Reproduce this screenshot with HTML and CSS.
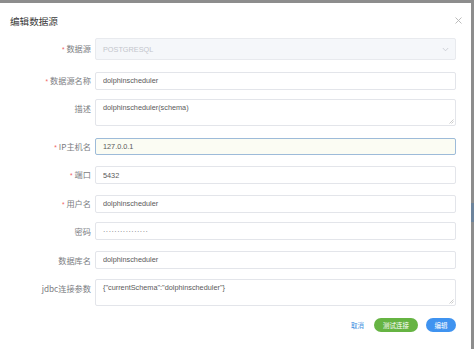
FILE: index.html
```html
<!DOCTYPE html>
<html lang="zh">
<head>
<meta charset="utf-8">
<link rel="stylesheet" href="styles.css">
</head>
<body>
<div class="screen">
  <div class="dialog">
    <div class="header">
      <span class="title">编辑数据源</span>
      <svg class="close" width="7" height="7" viewBox="0 0 7 7"><path d="M0.5 0.5L6.5 6.5M6.5 0.5L0.5 6.5" stroke="#b4b4b4" stroke-width="0.9"/></svg>
    </div>
    <div class="form">
      <div class="row row-select">
        <label class="label"><span class="req">*</span>数据源</label>
        <div class="field select disabled">POSTGRESQL
          <svg class="arrow" width="7" height="5" viewBox="0 0 7 5"><path d="M0.8 1L3.5 3.8L6.2 1" fill="none" stroke="#c9ccd2" stroke-width="0.9"/></svg>
        </div>
      </div>
      <div class="row">
        <label class="label"><span class="req">*</span>数据源名称</label>
        <input class="field" type="text" value="dolphinscheduler">
      </div>
      <div class="row row-area">
        <label class="label">描述</label>
        <div class="field area">dolphinscheduler(schema)<svg class="grip" width="5" height="5" viewBox="0 0 5 5"><path d="M4.5 0.5L0.5 4.5M4.5 2.5L2.5 4.5" stroke="#aaa" stroke-width="0.6"/></svg></div>
      </div>
      <div class="row">
        <label class="label"><span class="req">*</span>IP主机名</label>
        <input class="field focused" type="text" value="127.0.0.1">
      </div>
      <div class="row">
        <label class="label"><span class="req">*</span>端口</label>
        <input class="field" type="text" value="5432">
      </div>
      <div class="row">
        <label class="label"><span class="req">*</span>用户名</label>
        <input class="field" type="text" value="dolphinscheduler">
      </div>
      <div class="row">
        <label class="label">密码</label>
        <div class="field pwd">················</div>
      </div>
      <div class="row">
        <label class="label">数据库名</label>
        <input class="field" type="text" value="dolphinscheduler">
      </div>
      <div class="row row-area">
        <label class="label">jdbc连接参数</label>
        <div class="field area">{"currentSchema":"dolphinscheduler"}<svg class="grip" width="5" height="5" viewBox="0 0 5 5"><path d="M4.5 0.5L0.5 4.5M4.5 2.5L2.5 4.5" stroke="#aaa" stroke-width="0.6"/></svg></div>
      </div>
    </div>
    <div class="footer">
      <span class="cancel">取消</span>
      <span class="btn btn-green">测试连接</span>
      <span class="btn btn-blue">编辑</span>
    </div>
  </div>
  <div class="side"><div class="side-blue"></div></div>
</div>
</body>
</html>
```

FILE: styles.css
```css
html, body {
  margin: 0;
  padding: 0;
  height: 100%;
  overflow: hidden;
  background: #8d8d8d;
}
.screen {
  display: flex;
  height: 100%;
  padding-top: 3px;
  box-sizing: border-box;
}
.dialog {
  width: 471px;
  flex: none;
  background: #fff;
  font-family: "Liberation Sans", "Noto Sans CJK SC", sans-serif;
}
.side {
  flex: 1;
  padding-top: 200px;
}
.side-blue {
  height: 19px;
  background: #6d849c;
}
.header {
  height: 35px;
  display: flex;
  align-items: center;
  justify-content: space-between;
  padding: 0 9px 0 10px;
}
.title {
  font-family: "Noto Sans CJK SC", sans-serif;
  font-size: 9.6px;
  color: #3a3a3a;
}
.close {
  display: block;
}
.form {
  display: flex;
  flex-direction: column;
  gap: 10.5px;
  padding-right: 15px;
}
.row {
  display: grid;
  grid-template-columns: 91px 1fr;
  column-gap: 4px;
  align-items: center;
  height: 18px;
}
.row-select { height: 22px; }
.row-area {
  height: 27px;
  align-items: start;
}
.label {
  text-align: right;
  font-family: "Noto Sans CJK SC", sans-serif;
  font-size: 8.2px;
  color: #7b7d82;
  line-height: 18px;
}
.req {
  color: #f06060;
  font-family: "Liberation Sans", sans-serif;
  font-size: 6.5px;
  margin-right: 2px;
}
.field {
  box-sizing: border-box;
  height: 18px;
  width: 100%;
  margin: 0;
  border: 1px solid #e3e5ea;
  border-radius: 2px;
  padding: 0 7px;
  font-family: "Liberation Sans", sans-serif;
  font-size: 7.3px;
  color: #5a5a5a;
  background: #fff;
  outline: none;
}
.select {
  height: 22px;
  display: flex;
  align-items: center;
  justify-content: space-between;
  padding-right: 6px;
}
.disabled {
  background: #f5f7fa;
  border-color: #e8eaee;
  color: #c3c6cc;
}
.focused {
  border-color: #9dbbd9;
  background: #fbfcf3;
  height: 17px;
}
.pwd {
  display: flex;
  align-items: center;
  font-size: 7px;
  letter-spacing: 0.5px;
  color: #666;
}
.area {
  position: relative;
  height: 27px;
  padding: 3px 7px;
  line-height: 10px;
}
.grip {
  position: absolute;
  right: 1px;
  bottom: 1px;
  display: block;
}
.footer {
  display: flex;
  justify-content: flex-end;
  align-items: center;
  padding: 12px 15px 0 0;
  font-family: "Noto Sans CJK SC", sans-serif;
  font-size: 6.5px;
}
.cancel {
  color: #3f8fe0;
  margin-right: 10px;
}
.btn {
  height: 14px;
  line-height: 14px;
  border-radius: 7px;
  color: #fff;
  text-align: center;
}
.btn-green {
  width: 44px;
  background: #66b443;
  margin-right: 8px;
}
.btn-blue {
  width: 30px;
  background: #3f93f0;
}
```
